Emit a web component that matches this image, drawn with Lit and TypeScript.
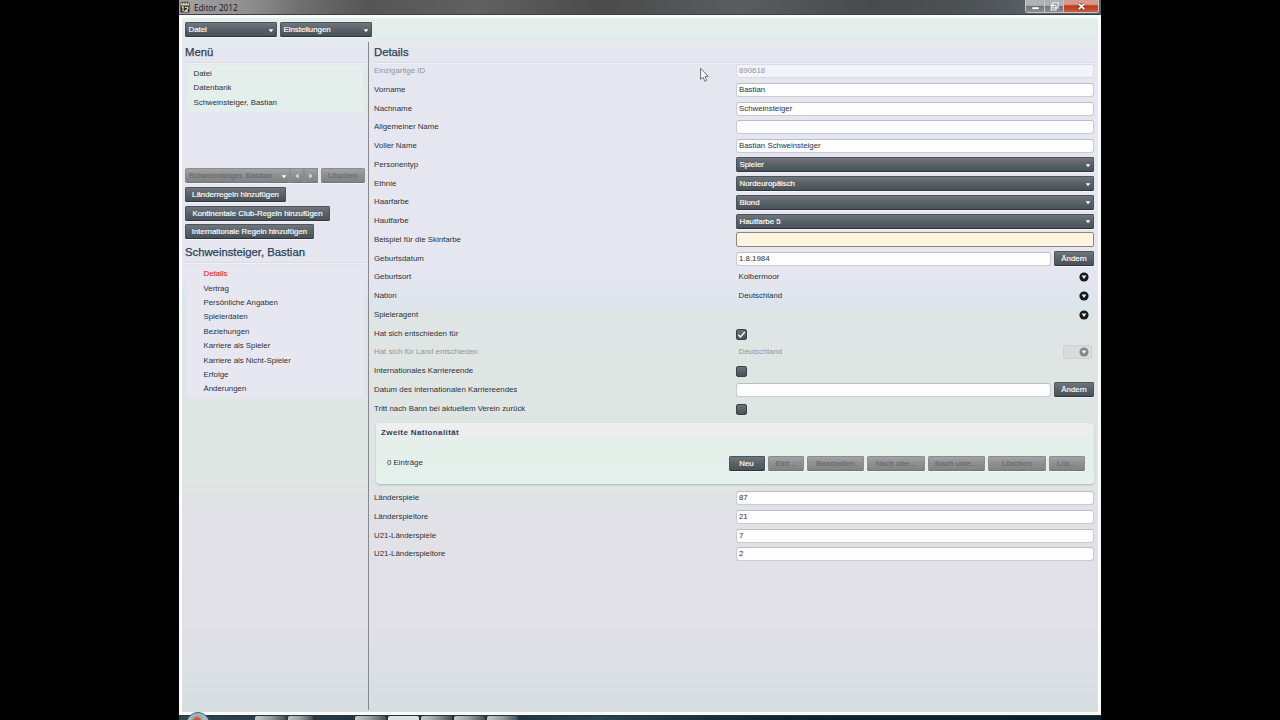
import { LitElement, html, css, svg, nothing } from "lit";
import { customElement } from "lit/decorators.js";
import { classMap } from "lit/directives/class-map.js";

type Kind = "text" | "select" | "skin" | "date" | "link" | "check";

interface Field {
  label: string;
  kind: Kind;
  value?: string;
  disabled?: boolean;
  checked?: boolean;
}

const FIELDS: Field[] = [
  { label: "Einzigartige ID", kind: "text", value: "890618", disabled: true },
  { label: "Vorname", kind: "text", value: "Bastian" },
  { label: "Nachname", kind: "text", value: "Schweinsteiger" },
  { label: "Allgemeiner Name", kind: "text" },
  { label: "Voller Name", kind: "text", value: "Bastian Schweinsteiger" },
  { label: "Personentyp", kind: "select", value: "Spieler" },
  { label: "Ethnie", kind: "select", value: "Nordeuropäisch" },
  { label: "Haarfarbe", kind: "select", value: "Blond" },
  { label: "Hautfarbe", kind: "select", value: "Hautfarbe 5" },
  { label: "Beispiel für die Skinfarbe", kind: "skin" },
  { label: "Geburtsdatum", kind: "date", value: "1.8.1984" },
  { label: "Geburtsort", kind: "link", value: "Kolbermoor" },
  { label: "Nation", kind: "link", value: "Deutschland" },
  { label: "Spieleragent", kind: "link" },
  { label: "Hat sich entschieden für", kind: "check", checked: true },
  { label: "Hat sich für Land entschieden", kind: "link", value: "Deutschland", disabled: true },
  { label: "Internationales Karriereende", kind: "check" },
  { label: "Datum des internationalen Karriereendes", kind: "date" },
  { label: "Tritt nach Bann bei aktuellem Verein zurück", kind: "check" },
];

const CAPS: Field[] = [
  { label: "Länderspiele", kind: "text", value: "87" },
  { label: "Länderspieltore", kind: "text", value: "21" },
  { label: "U21-Länderspiele", kind: "text", value: "7" },
  { label: "U21-Länderspieltore", kind: "text", value: "2" },
];

const MENU = ["Datei", "Datenbank", "Schweinsteiger, Bastian"];
const SECTIONS = [
  "Details", "Vertrag", "Persönliche Angaben", "Spielerdaten", "Beziehungen",
  "Karriere als Spieler", "Karriere als Nicht-Spieler", "Erfolge", "Änderungen",
];

const caret = html`<svg class="caret" width="6" height="4" viewBox="0 0 6 4">${svg`<path d="M0.6 0.3H5.4L3 3.2Z" fill="#fff"/>`}</svg>`;

@customElement("app-root")
export class AppRoot extends LitElement {
  static styles = css`
    :host {
      display: flex;
      justify-content: center;
      position: relative;
      width: 1280px;
      height: 720px;
      overflow: hidden;
      background: #000;
      font-family: "Liberation Sans", Arial, sans-serif;
      font-size: 7.87px;
      line-height: 14px;
      color: #2f3138;
      white-space: nowrap;
    }
    * { box-sizing: border-box; }
    svg { display: block; flex: none; }
    .screen { width: 922px; display: flex; flex-direction: column; }

    .title {
      height: 15px;
      flex: none;
      display: flex;
      align-items: flex-start;
      padding: 0 2px 0 1px;
      border-bottom: 1px solid #3c4144;
      background: linear-gradient(90deg, #a3a3a3 0, #8e8e8e 70px, #707070 120px, #555 190px, #616161 300px, #4b4b4b 420px, #5a5c5e 560px, #484a4c 690px, #4d5358 800px, #5b6368 860px);
    }
    .title-icon { margin: 1px 0 0 0; }
    .title-text {
      font-family: "Open Sans", "Noto Sans", sans-serif;
      font-size: 8.2px;
      line-height: 15px;
      color: #101214;
      margin-left: 4px;
      flex: 1;
    }
    .win { display: flex; height: 13px; border: 1px solid #c3c6c8; border-top: 0; border-radius: 0 0 3px 3px; overflow: hidden; }
    .win-btn { display: flex; justify-content: center; align-items: center; width: 19px; background: linear-gradient(#aeb2b5 0 45%, #6f7478 50%, #8a8f93); border-right: 1px solid #c3c6c8; }
    .win-btn.close { width: 34px; border: 0; background: linear-gradient(#d79a8b 0 35%, #b83a20 50%, #cf5b3c); }

    .frame { flex: 1; min-height: 0; padding: 3px; background: #fafcfc; }
    .app {
      height: 694px;
      display: flex;
      flex-direction: column;
      background: linear-gradient(#e3efeb 0, #e3edeb 20px, #e5e6ef 32px, #e6e6f0 150px, #e5e6ef 262px, #dce5ee 282px, #dfe5e4 298px, #dfe5e3 465px, #e1e1e7 492px, #e0e0e6 610px, #dbe0e4 650px, #d6dde1 694px);
    }
    .toolbar { height: 24px; flex: none; display: flex; gap: 3px; padding: 4px 0 0 3px; }
    .toolbar .btn { width: 92px; }

    .btn {
      height: 15px;
      flex: none;
      display: flex;
      align-items: center;
      justify-content: center;
      border-radius: 1.5px;
      border: 1px solid #4c5359;
      border-bottom-color: #30363c;
      background: linear-gradient(#70767b, #5b636a 45%, #4a5259);
      color: #f6f8f9;
      -webkit-text-stroke: 0.2px #f6f8f9;
      box-shadow: 0 1px 0 rgba(255, 255, 255, 0.5);
      line-height: 13px;
    }
    .btn.drop { justify-content: space-between; padding: 0 2px 0 2.5px; }
    .btn.off {
      background: linear-gradient(#a2a3a5, #8d8f90 50%, #818384);
      border-color: #8a8c8e;
      border-bottom-color: #747678;
      color: #686a6c;
      -webkit-text-stroke: 0.15px #686a6c;
    }
    .caret { margin-top: 2px; }

    .body { flex: 1; min-height: 0; display: flex; }
    .side { width: 185.5px; flex: none; padding: 0 2.5px 0 3px; }
    .rule { width: 1.5px; flex: none; margin-bottom: 2px; background: #85888e; }
    .main { flex: 1; padding: 0 4px 0 5px; }

    .h {
      font-size: 11.3px;
      height: 21px;
      line-height: 21px;
      color: #2b4257;
      -webkit-text-stroke: 0.25px #2b4257;
      border-bottom: 1px solid #d9dbe2;
      box-shadow: 0 1px 0 #f1f1f7;
    }
    .menu { width: 175px; margin: 3px 0 0 3px; padding: 1px 0 0 5.5px; height: 45px; background: rgba(227, 240, 234, 0.8); box-shadow: 0 0 3px 1px rgba(227, 240, 234, 0.8); }
    .menu.sections { height: 130px; margin-top: 4px; padding: 0 0 0 15.5px; background: #e6e7f0; box-shadow: 0 0 3px 1px #e6e7f0; }
    .item { height: 14.4px; line-height: 14.4px; }
    .item.on { color: #e01d24; -webkit-text-stroke: 0.1px #e01d24; }

    .nav { display: flex; margin-top: 57px; }
    .nav .drop { width: 104.5px; border-radius: 2px 0 0 2px; }
    .nav .arrow { width: 14px; border-radius: 0; }
    .nav .last { width: 44.5px; margin-left: 3px; }
    .adds { display: flex; flex-direction: column; gap: 3.75px; margin-top: 3.75px; align-items: flex-start; }
    .w1 { width: 101px; }
    .w2 { width: 145px; }
    .w3 { width: 129px; }
    .h.second { margin-top: 3px; }

    .head-gap { height: 19.8px; }
    .rows { margin-top: -1.2px; }
    .row { height: 18.75px; display: grid; grid-template-columns: 362px 358px; align-items: center; }
    .row.off { color: #92949b; }
    .cell { display: flex; align-items: center; gap: 3px; }
    .box {
      flex: 1;
      height: 14px;
      line-height: 11px;
      padding-left: 2px;
      border: 1px solid #c8cbd0;
      border-top-color: #bbbec3;
      border-radius: 3px;
      background: #fdfdfe;
    }
    .row.off .box { background: #f2f3fb; border-color: #d9dbe3; }
    .box.skin { height: 15px; background: #fef4e0; border-color: #8b8882; border-radius: 2px; }
    .cell .drop { flex: 1; }
    .cell .edit { width: 40px; }
    .link { flex: 1; display: flex; justify-content: space-between; align-items: center; height: 14px; padding: 0 5px 0 2.5px; line-height: 12px; }
    .link-value { margin-top: -1px; }
    .link-end { display: flex; justify-content: flex-end; align-items: center; height: 14px; }
    .link-end.off { width: 29px; margin-right: -3px; padding-right: 2px; background: #d9dcdc; border: 1px solid #cdd1d1; border-radius: 2px; }
    .check { width: 11px; height: 11px; margin-top: 1px; border-radius: 2px; border: 1px solid #3a4147; background: linear-gradient(#6b7278, #49525a); display: flex; align-items: center; justify-content: center; }

    .group {
      height: 61px;
      margin: 4.75px 0 5px 2px;
      border-radius: 4px;
      background: linear-gradient(#efefef 0, #ececec 9px, #e4efea 20px, #e4f0eb);
      box-shadow: 0 1px 2px rgba(90, 100, 100, 0.35);
      padding: 3.5px 9.5px 0 5px;
    }
    .group-title { font-size: 8px; font-weight: bold; letter-spacing: 0.39px; line-height: 13px; color: #2d4055; }
    .group-row { display: flex; justify-content: space-between; align-items: center; margin-top: 16.5px; padding-left: 6px; }
    .group-btns { display: flex; gap: 3px; }
    .b36 { width: 36px; }
    .b58 { width: 57.5px; }

    .cursor { position: absolute; left: 699px; top: 67px; }
    .orb { position: absolute; left: 186px; top: 712px; width: 24px; height: 24px; border-radius: 50%; border: 1.5px solid #38596a; background: radial-gradient(circle at 10px 8px, #d9532a 0 3px, #94adb4 5px, #a9c0c6 9px); }
    .taskbar { height: 5px; flex: none; display: flex; gap: 2px; padding-left: 76px; border-top: 1px solid #26353d; background: linear-gradient(90deg, #33444d, #1f313b 240px, #223540 340px, #294550 420px, #10242e 600px, #0d2029); }
    .task { background: linear-gradient(100deg, #c9cbcb, #999c9d 50%, #444b50); border-radius: 2px 2px 0 0; width: 31px; }
    .task.narrow { width: 25px; margin-right: 40px; }
    .task.active { background: #dfe2e5; }
  `;

  private editor(f: Field) {
    switch (f.kind) {
      case "text":
        return html`<div class="box">${f.value ?? nothing}</div>`;
      case "skin":
        return html`<div class="box skin"></div>`;
      case "select":
        return html`<div class="btn drop"><span>${f.value}</span>${caret}</div>`;
      case "date":
        return html`<div class="box">${f.value ?? nothing}</div><div class="btn edit">Ändern</div>`;
      case "check":
        return html`<div class="check">${f.checked
          ? html`<svg width="9" height="9" viewBox="0 0 9 9">${svg`<path d="M1.3 4.8L3.5 7L7.7 2" fill="none" stroke="#fff" stroke-width="1.4"/>`}</svg>`
          : nothing}</div>`;
      case "link":
        return html`<div class="link">
          <span class="link-value">${f.value ?? nothing}</span>
          <span class=${classMap({ "link-end": true, off: !!f.disabled })}>
            <svg width="10" height="10" viewBox="0 0 10 10">${svg`
              <circle cx="5" cy="5" r="4.6" fill=${f.disabled ? "#85888a" : "#17191b"} />
              <path d="M2.6 3.6H7.4L5 7Z" fill="#eef0f0" />`}</svg>
          </span>
        </div>`;
    }
  }

  private row = (f: Field) => html`
    <div class=${classMap({ row: true, off: !!f.disabled })}>
      <span>${f.label}</span>
      <div class="cell">${this.editor(f)}</div>
    </div>`;

  render() {
    return html`
      <div class="screen">
        <div class="title">
          <svg class="title-icon" width="10" height="12" viewBox="0 0 10 12">${svg`
            <rect x="0.5" y="1.5" width="9" height="10" fill="#2e2a24"/>
            <path d="M1 2H9V4.5H1Z" fill="#d8c9a4"/>
            <path d="M2.5 0.5V3M5 0.5V3M7.5 0.5V3" stroke="#4a4132" stroke-width="0.8"/>
            <path d="M1.8 6.3L3 5.6V10.5M4.8 6.2H7.8V8L5 10.2H8.2" fill="none" stroke="#f3ead2" stroke-width="1.1"/>`}</svg>
          <span class="title-text">Editor 2012</span>
          <div class="win">
            <div class="win-btn"><svg width="9" height="9" viewBox="0 0 9 9">${svg`<rect x="1" y="5" width="7" height="2.4" fill="#fff" stroke="#555" stroke-width="0.4"/>`}</svg></div>
            <div class="win-btn"><svg width="9" height="9" viewBox="0 0 9 9">${svg`<path d="M3 1H8V6H3ZM1.2 3.2H6V8H1.2Z" fill="#777" stroke="#fff" stroke-width="1.1"/>`}</svg></div>
            <div class="win-btn close"><svg width="9" height="9" viewBox="0 0 9 9">${svg`<path d="M1.8 1.8L7.2 7.2M7.2 1.8L1.8 7.2" stroke="#6a2a1c" stroke-width="2.8"/><path d="M1.8 1.8L7.2 7.2M7.2 1.8L1.8 7.2" stroke="#fff" stroke-width="1.8"/>`}</svg></div>
          </div>
        </div>
        <div class="frame">
          <div class="app">
            <div class="toolbar">
              <div class="btn drop"><span>Datei</span>${caret}</div>
              <div class="btn drop"><span>Einstellungen</span>${caret}</div>
            </div>
            <div class="body">
              <div class="side">
                <div class="h">Menü</div>
                <div class="menu">${MENU.map((m) => html`<div class="item">${m}</div>`)}</div>
                <div class="nav">
                  <div class="btn off drop"><span>Schweinsteiger, Bastian</span>${caret}</div>
                  <div class="btn off arrow"><svg width="4" height="6" viewBox="0 0 4 6">${svg`<path d="M3.6 0.4V5.6L0.4 3Z" fill="#dcdcdc"/>`}</svg></div>
                  <div class="btn off arrow"><svg width="4" height="6" viewBox="0 0 4 6">${svg`<path d="M0.4 0.4V5.6L3.6 3Z" fill="#dcdcdc"/>`}</svg></div>
                  <div class="btn off last">Löschen</div>
                </div>
                <div class="adds">
                  <div class="btn w1">Länderregeln hinzufügen</div>
                  <div class="btn w2">Kontinentale Club-Regeln hinzufügen</div>
                  <div class="btn w3">Internationale Regeln hinzufügen</div>
                </div>
                <div class="h second">Schweinsteiger, Bastian</div>
                <div class="menu sections">${SECTIONS.map((s, i) => html`<div class=${classMap({ item: true, on: i === 0 })}>${s}</div>`)}</div>
              </div>
              <div class="rule"></div>
              <div class="main">
                <div class="h">Details</div>
                <div class="rows">
                  ${FIELDS.map(this.row)}
                  <div class="group">
                    <div class="group-title">Zweite Nationalität</div>
                    <div class="group-row">
                      <span>0 Einträge</span>
                      <div class="group-btns">
                        <div class="btn b36">Neu</div>
                        <div class="btn off b36">Einf...</div>
                        <div class="btn off b58">Bearbeiten</div>
                        <div class="btn off b58">Nach obe...</div>
                        <div class="btn off b58">Nach unte...</div>
                        <div class="btn off b58">Löschen</div>
                        <div class="btn off b36">Lös...</div>
                      </div>
                    </div>
                  </div>
                  ${CAPS.map(this.row)}
                </div>
              </div>
            </div>
          </div>
        </div>
        <div class="taskbar">
          <div class="task"></div><div class="task narrow"></div>
          <div class="task"></div><div class="task active"></div><div class="task"></div><div class="task"></div><div class="task"></div>
        </div>
      </div>
      <div class="orb"></div>
      <svg class="cursor" width="10" height="16" viewBox="0 0 10 16">${svg`<path d="M1.5 1.2V12.4L4 10.2L5.8 14.3L7.7 13.5L6 9.6L9.2 9.3Z" fill="#f4f4f8" stroke="#55575e" stroke-width="0.8"/>`}</svg>
    `;
  }
}
